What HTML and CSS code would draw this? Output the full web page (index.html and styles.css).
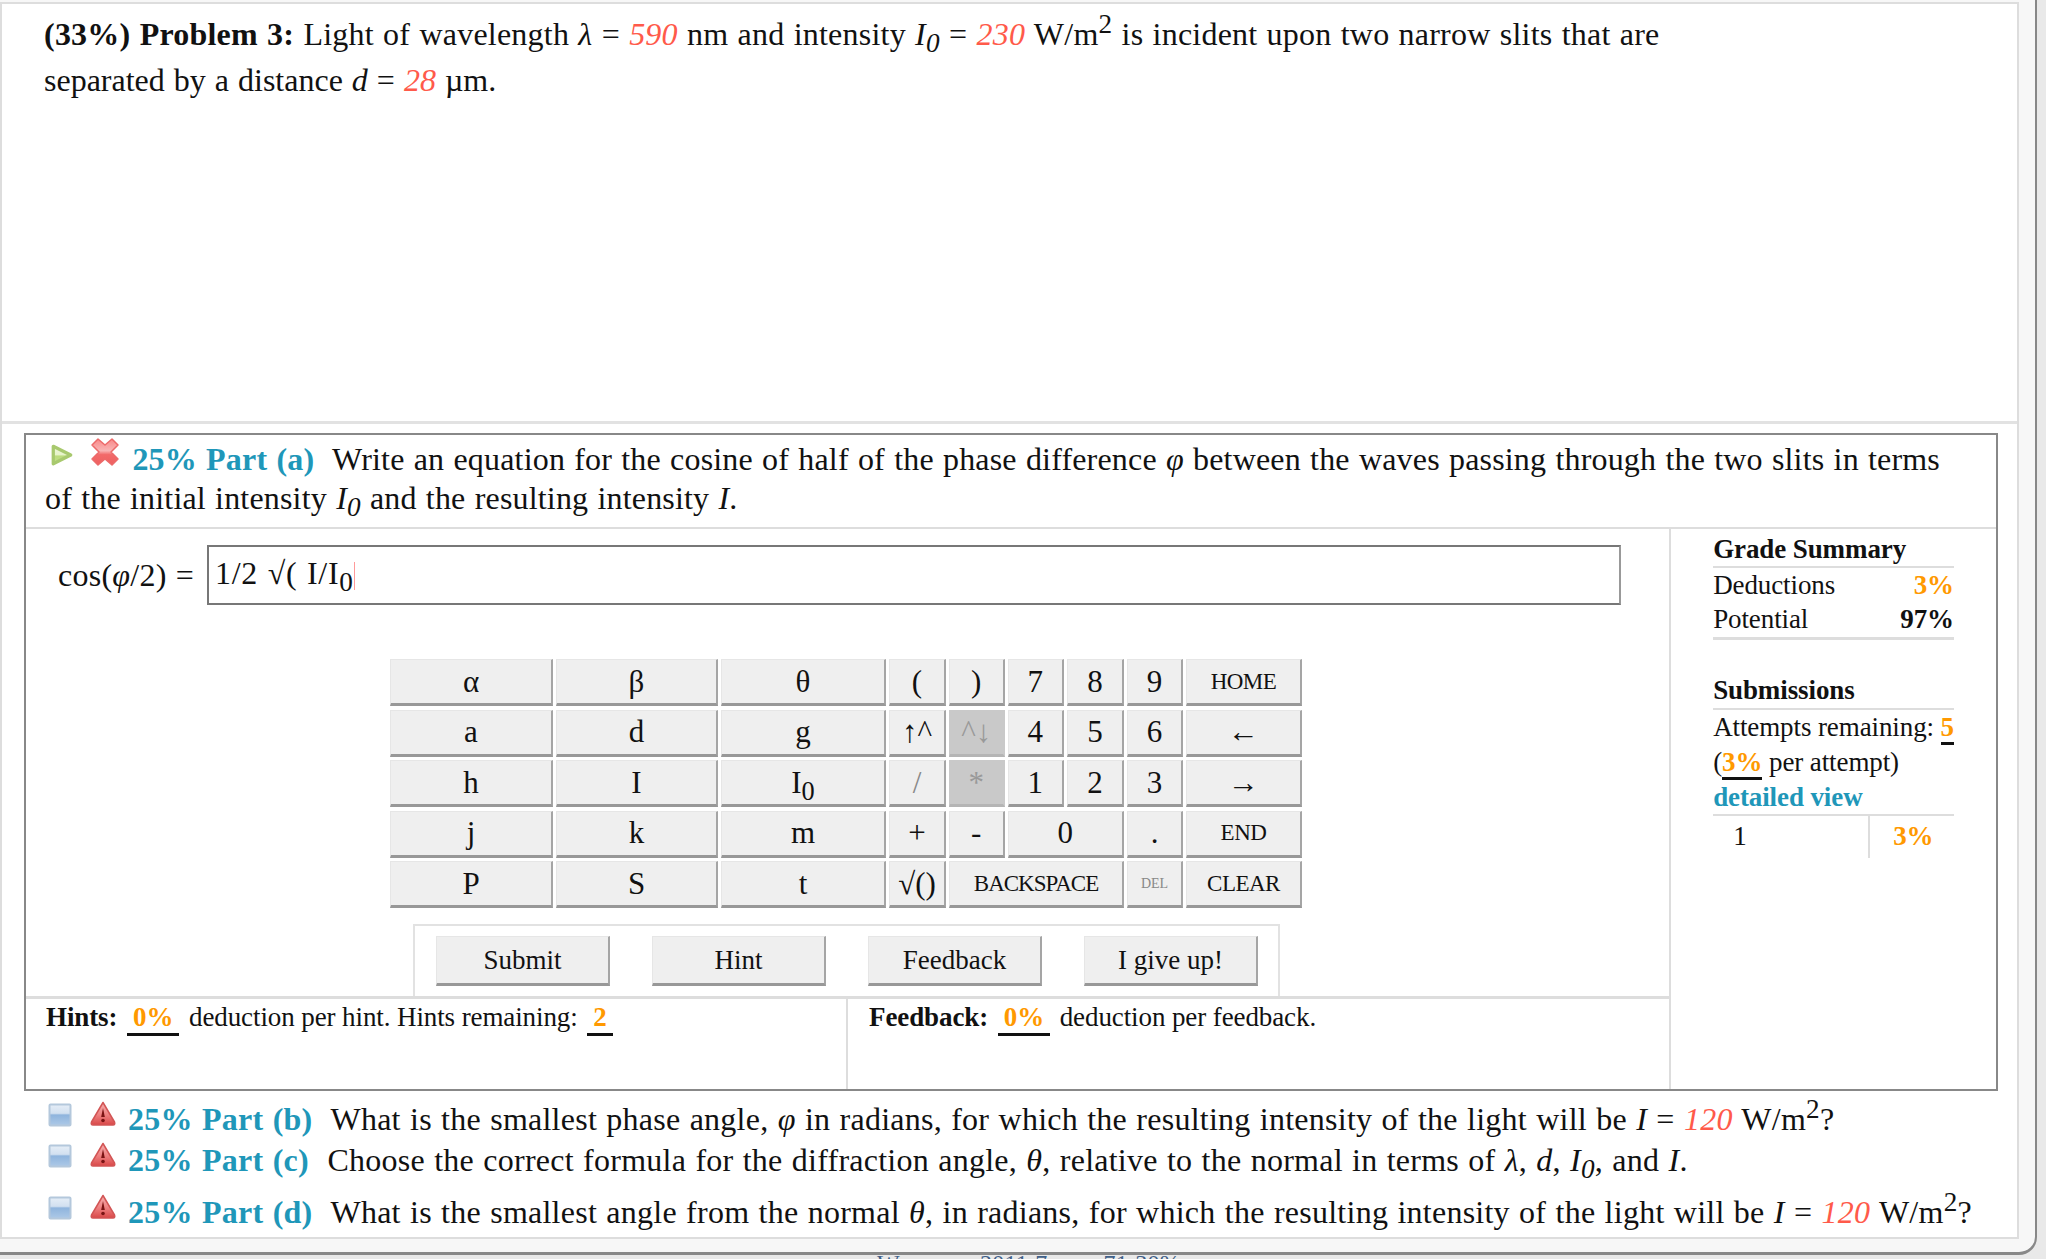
FILE: index.html
```html
<!DOCTYPE html>
<html lang="en">
<head>
<meta charset="utf-8">
<title>Problem 3</title>
<link rel="stylesheet" href="styles.css">
</head>
<body>
<svg class="defs" width="0" height="0" aria-hidden="true">
  <defs>
    <linearGradient id="gb" x1="0" y1="0" x2="0" y2="1">
      <stop offset="0" stop-color="#e6eef7"/><stop offset=".42" stop-color="#d2e0f0"/><stop offset=".5" stop-color="#8fb4dd"/><stop offset="1" stop-color="#adc9e7"/>
    </linearGradient>
    <linearGradient id="gr" x1="0" y1="0" x2="0" y2="1">
      <stop offset="0" stop-color="#f6b0b0"/><stop offset=".55" stop-color="#ee8080"/><stop offset="1" stop-color="#d94848"/>
    </linearGradient>
    <linearGradient id="gg" x1="0" y1="0" x2="0" y2="1">
      <stop offset="0" stop-color="#eef7dc"/><stop offset=".5" stop-color="#e6f3c8"/><stop offset=".55" stop-color="#bcdc7c"/><stop offset="1" stop-color="#c2e08a"/>
    </linearGradient>
    <linearGradient id="gx" x1="0" y1="0" x2="0" y2="1">
      <stop offset="0" stop-color="#f98a8a"/><stop offset=".45" stop-color="#f8b4b4"/><stop offset=".6" stop-color="#f26a6a"/><stop offset="1" stop-color="#ee6060"/>
    </linearGradient>
    <symbol id="minus" viewBox="0 0 24 24"><rect x="1.500" y="1.500" width="21" height="21" rx="1" fill="url(#gb)" stroke="#b4c8dc" stroke-width="2"/></symbol>
    <symbol id="warn" viewBox="0 0 26 26"><path d="M13 1.500 L24.500 21 Q25.500 24 23 24 H3 Q0.500 24 1.500 21 Z" fill="url(#gr)" stroke="#d25555" stroke-width="1.500" stroke-linejoin="round"/><path d="M13 7 L14.800 16 H11.200 Z" fill="#7a1414"/><circle cx="13" cy="19.500" r="1.800" fill="#7a1414"/></symbol>
  </defs>
</svg>
<div class="frame">
  <main class="panel">
    <section class="problem">
      <p class="line"><b>(33%) Problem 3:</b> Light of wavelength <i>λ</i> = <i class="val">590</i> nm and intensity <i>I<sub>0</sub></i> = <i class="val">230</i> W/m<sup>2</sup> is incident upon two narrow slits that are</p>
      <p class="line second">separated by a distance <i>d</i> = <i class="val">28</i> µm.</p>
    </section>
    <section class="part-a">
      <header class="part-head">
        <svg class="ic-play" viewBox="0 0 22 22"><path d="M3 3 L19 11 L3 19 Z" fill="url(#gg)" stroke="#a8c96e" stroke-width="3" stroke-linejoin="round"/></svg>
        <svg class="ic-x" viewBox="0 0 30 30"><path d="M8 2 L15 8 L22 2 L28 8 L21 15 L28 22 L22 28 L15 22 L8 28 L2 22 L9 15 L2 8 Z" fill="url(#gx)" stroke="#ec6a6a" stroke-width="1.500" stroke-linejoin="round"/></svg>
        <span class="pct">25% Part (a)</span>&nbsp; Write an equation for the cosine of half of the phase difference <i>φ</i> between the waves passing through the two slits in terms<br>of the initial intensity <i>I<sub>0</sub></i> and the resulting intensity <i>I</i>.
      </header>
      <div class="part-body">
        <div class="work">
          <div class="entry">
            <span class="eq">cos(<i>φ</i>/2) =</span>
            <div class="input">1/2 √( I/I<sub>0</sub><span class="caret"></span></div>
          </div>
          <div class="keys">
            <button class="key">α</button><button class="key">β</button><button class="key">θ</button><button class="key">(</button><button class="key">)</button><button class="key">7</button><button class="key">8</button><button class="key">9</button><button class="key small">HOME</button>
            <button class="key">a</button><button class="key">d</button><button class="key">g</button><button class="key">↑^</button><button class="key off">^↓</button><button class="key">4</button><button class="key">5</button><button class="key">6</button><button class="key">←</button>
            <button class="key">h</button><button class="key">I</button><button class="key">I<sub>0</sub></button><button class="key dim">/</button><button class="key off">*</button><button class="key">1</button><button class="key">2</button><button class="key">3</button><button class="key">→</button>
            <button class="key">j</button><button class="key">k</button><button class="key">m</button><button class="key">+</button><button class="key">-</button><button class="key span2">0</button><button class="key">.</button><button class="key small">END</button>
            <button class="key">P</button><button class="key">S</button><button class="key">t</button><button class="key">√()</button><button class="key small span3 narrow">BACKSPACE</button><button class="key tiny">DEL</button><button class="key small">CLEAR</button>
          </div>
          <div class="actions">
            <button class="act">Submit</button><button class="act">Hint</button><button class="act">Feedback</button><button class="act">I give up!</button>
          </div>
          <div class="notes">
            <div class="note hints"><b>Hints:</b> <u class="amt"><span>0%</span></u> deduction per hint. Hints remaining: <u class="amt"><span>2</span></u></div>
            <div class="note"><b>Feedback:</b> <u class="amt"><span>0%</span></u> deduction per feedback.</div>
          </div>
        </div>
        <aside class="side">
          <h3>Grade Summary</h3>
          <div class="row"><span>Deductions</span><span class="or">3%</span></div>
          <div class="row rule-b"><span>Potential</span><b>97%</b></div>
          <h3 class="sub">Submissions</h3>
          <div class="att">Attempts remaining: <u class="amt tight"><span>5</span></u><br>(<u class="amt tight"><span>3%</span></u> per attempt)<br><a class="link">detailed view</a></div>
          <div class="hist"><span class="n">1</span><span class="or p">3%</span></div>
        </aside>
      </div>
    </section>
    <section class="others">
      <p class="other"><svg class="ic-m"><use href="#minus"/></svg><svg class="ic-w"><use href="#warn"/></svg><span class="pct">25% Part (b)</span>&nbsp; What is the smallest phase angle, <i>φ</i> in radians, for which the resulting intensity of the light will be <i>I</i> = <i class="val">120</i> W/m<sup>2</sup>?</p>
      <p class="other"><svg class="ic-m"><use href="#minus"/></svg><svg class="ic-w"><use href="#warn"/></svg><span class="pct">25% Part (c)</span>&nbsp; Choose the correct formula for the diffraction angle, <i>θ</i>, relative to the normal in terms of <i>λ</i>, <i>d</i>, <i>I<sub>0</sub></i>, and <i>I</i>.</p>
      <p class="other last"><svg class="ic-m"><use href="#minus"/></svg><svg class="ic-w"><use href="#warn"/></svg><span class="pct">25% Part (d)</span>&nbsp; What is the smallest angle from the normal <i>θ</i>, in radians, for which the resulting intensity of the light will be <i>I</i> = <i class="val">120</i> W/m<sup>2</sup>?</p>
    </section>
  </main>
</div>
<footer class="cutoff"><span>W</span><span class="mid">2011 7</span><span class="end">71 30%</span></footer>
</body>
</html>
```
FILE: styles.css
```css
* { box-sizing: border-box; }
html, body { margin: 0; height: 100%; overflow: hidden; }
body { font-family: "Liberation Serif", serif; font-size: 32px; letter-spacing: 0.25px; word-spacing: 1px; color: #111; width: 2046px; height: 1259px; position: relative; background: #e9e9e9; }
.defs { position: absolute; }
p { margin: 0; }
sub, sup { font-size: 0.85em; line-height: 0; }
.frame { width: 2037px; height: 1255px; padding: 2px 16px 13px 0; background: #f7f7f7; border-right: 2px solid #888; border-bottom: 3px solid #888; border-bottom-right-radius: 18px; }
.panel { height: 100%; background: #fff; border: 2px solid #ddd; }
.problem { height: 420px; padding: 7px 0 0 42px; border-bottom: 3px solid #e2e2e2; }
.line { line-height: 46px; height: 46px; white-space: nowrap; letter-spacing: 0.22px; }
.line.second { letter-spacing: 0; }
.val { color: #ff5a4a; }
.part-a { width: 1974px; height: 658px; margin: 9px 0 0 22px; border: 2px solid #888; background: #fff; display: flex; flex-direction: column; }
.part-head { height: 94px; padding: 2px 0 0 19px; line-height: 39px; letter-spacing: 0.18px; border-bottom: 2px solid #ddd; white-space: nowrap; }
.pct { color: #1f97b9; font-weight: bold; }
.ic-play { width: 24px; height: 24px; margin: 0 7px 0 5px; vertical-align: 3px; }
.ic-x { width: 30px; height: 30px; margin: 0 3px 0 0; vertical-align: 3px; }
.part-body { flex: 1; display: flex; min-height: 0; }
.work { width: 1651px; border-right: 2px solid #ddd; display: flex; flex-direction: column; align-items: flex-start; }
.entry { display: flex; align-items: center; margin: 16px 0 0 32px; height: 60px; }
.eq { width: 149px; white-space: nowrap; }
.input { width: 1414px; height: 60px; border: 2px solid #777; border-right-color: #999; padding: 0 0 0 6px; line-height: 52px; letter-spacing: 0.7px; white-space: nowrap; }
.caret { display: inline-block; width: 1px; height: 28px; background: #ff9a9a; vertical-align: -6px; }
.keys { display: grid; grid-template-columns: 163px 162px 165px 57px 55.5px 56.5px 57px 56px 116px; grid-auto-rows: 47px; column-gap: 3px; row-gap: 3.5px; margin: 54px 0 0 364px; }
.key, .act { font-family: "Liberation Serif", serif; color: #111; background: #efefef; border: 1px solid #e6e6e6; border-right: 2px solid #a5a5a5; border-bottom: 3px solid #989898; padding: 0; white-space: nowrap; overflow: hidden; }
.key { font-size: 31px; line-height: 40px; }
.key.small { font-size: 23px; letter-spacing: -0.5px; }
.key.narrow { letter-spacing: -1px; }
.key.tiny { font-size: 14px; color: #888; }
.key.span2 { grid-column: span 2; }
.key.span3 { grid-column: span 3; }
.key.dim { color: #888; }
.key.off { background: #c9c9c9; color: #999; border-color: #c9c9c9; border-bottom-color: #b5b5b5; }
.actions { display: flex; gap: 42px; width: 867px; height: 72px; margin: 16px 0 0 387px; padding: 10px 0 0 21px; border: 2px solid #e2e2e2; border-bottom: 0; }
.act { width: 174px; height: 50px; font-size: 27px; line-height: 38px; }
.notes { display: flex; width: 100%; flex: 1; border-top: 3px solid #ddd; font-size: 27px; letter-spacing: -0.1px; word-spacing: 0; }
.note { padding: 1px 0 0 21px; white-space: nowrap; line-height: 34px; }
.note.hints { width: 822px; padding-left: 20px; border-right: 2px solid #ddd; }
.amt { display: inline-block; padding: 0 6px; color: #f90; font-weight: bold; text-decoration: none; border-bottom: 3px solid #111; line-height: 32px; margin: 0 3px; }
.amt.tight { padding: 0; margin: 0; line-height: 30px; }
.side { flex: 1; padding: 3px 42px 0 42px; font-size: 27px; letter-spacing: -0.1px; word-spacing: 0; }
.side h3 { margin: 0; font-size: 27px; line-height: 34px; height: 36px; border-bottom: 2px solid #ddd; }
.side h3.sub { margin-top: 33px; height: 37px; }
.row { display: flex; justify-content: space-between; line-height: 34px; height: 34px; }
.row.rule-b { height: 38px; border-bottom: 3px solid #ddd; }
.or { color: #f90; font-weight: bold; }
.att { line-height: 34px; white-space: nowrap; }
.link { color: #1f97b9; font-weight: bold; }
.hist { display: flex; height: 44px; border-top: 2px solid #ddd; line-height: 40px; }
.hist .n { width: 157px; padding-left: 20px; border-right: 2px solid #ddd; }
.hist .p { padding-left: 23px; }
.others { padding: 8px 0 0 46px; }
.other { line-height: 41px; white-space: nowrap; }
.other.last { margin-top: 11px; }
.ic-m { width: 24px; height: 24px; margin-right: 18px; vertical-align: 3px; }
.ic-w { width: 26px; height: 26px; margin-right: 12px; vertical-align: 3px; }
.cutoff { display: flex; padding-left: 877px; font-size: 24px; line-height: 17px; color: #3f5f88; white-space: nowrap; }
.cutoff .mid { margin-left: 80px; }
.cutoff .end { margin-left: 56px; }
```
